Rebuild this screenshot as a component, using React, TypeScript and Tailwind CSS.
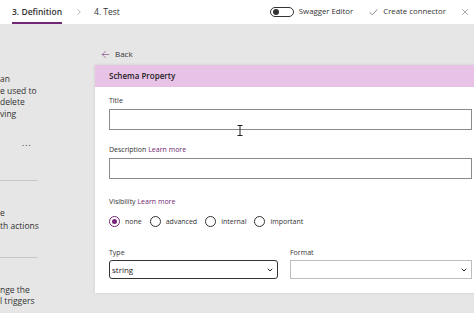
import { ArrowLeft, Check, ChevronDown, ChevronRight, X } from "lucide-react";

const font = { fontFamily: '"Open Sans", "Noto Sans", sans-serif' };

function TextBox() {
    return <div className="h-[21px] w-full border border-[#8a8a8a] bg-white" />;
}

function Radio({ label, checked }: { label: string; checked?: boolean }) {
    return (
        <div className="flex items-center gap-[5px]">
            <span
                className={
                    "flex h-[11px] w-[11px] items-center justify-center rounded-full border " +
                    (checked ? "border-[#742774]" : "border-[#333]")
                }
            >
                {checked && <span className="h-[5px] w-[5px] rounded-full bg-[#742774]" />}
            </span>
            <span className="text-[7px] text-[#333]">{label}</span>
        </div>
    );
}

function LeftText() {
    return (
        <div className="w-[39px] shrink-0 overflow-hidden pt-[49px] text-[8.5px] leading-[11.5px] text-[#333]">
            <p>an</p>
            <p className="whitespace-nowrap">e used to</p>
            <p>delete</p>
            <p>ving</p>
            <p className="mt-[18px] pl-[22px] tracking-[1px]">...</p>
            <div className="mt-[31px] h-px w-[38px] bg-[#c8c8c8]" />
            <p className="mt-[26px]">e</p>
            <p className="mt-[2px] whitespace-nowrap">th actions</p>
            <div className="mt-[25px] h-px w-[38px] bg-[#c8c8c8]" />
            <p className="mt-[26px] whitespace-nowrap">nge the</p>
            <p className="whitespace-nowrap">l triggers</p>
        </div>
    );
}

export default function App() {
    return (
        <div className="flex h-[313px] w-[474px] flex-col overflow-hidden bg-white" style={font}>
            <div className="flex h-[24px] shrink-0 items-stretch bg-white text-[8.5px] text-[#333]">
                <div className="ml-[12px] flex items-center border-b-[2px] border-[#742774] pt-[2px] font-semibold text-[#333]">
                    3. Definition
                </div>
                <div className="ml-[12px] flex items-center">
                    <ChevronRight size={10} strokeWidth={1.2} className="text-[#666]" />
                </div>
                <div className="ml-[10px] flex items-center">4. Test</div>
                <div className="ml-auto flex items-center gap-[5px] text-[7.8px]">
                    <span className="flex h-[10px] w-[24px] items-center rounded-full border border-[#333] px-[2px]">
                        <span className="h-[6px] w-[6px] rounded-full bg-[#333]" />
                    </span>
                    <span>Swagger Editor</span>
                </div>
                <div className="ml-[15px] flex items-center gap-[4px] text-[7.8px]">
                    <Check size={11} strokeWidth={1.2} />
                    <span>Create connector</span>
                </div>
                <div className="ml-[14px] mr-[4px] flex items-center">
                    <X size={10} strokeWidth={1.2} className="text-[#555]" />
                </div>
            </div>
            <div className="flex flex-1 bg-[#e6e6e6]">
                <LeftText />
                <div className="ml-[56px] flex w-[391px] shrink-0 flex-col">
                    <div className="mt-[23px] flex h-[14px] items-center gap-[4px] pl-[5px] text-[8px] text-[#333]">
                        <ArrowLeft size={11} strokeWidth={1.2} className="text-[#742774]" />
                        <span>Back</span>
                    </div>
                    <div className="relative mt-[4px] bg-white shadow-[0_0_3px_rgba(0,0,0,0.12)]">
                        <div className="flex h-[22px] items-center bg-[#e9c2e8] px-[14px] text-[8px] font-semibold text-[#222]">
                            Schema Property
                        </div>
                        <div className="px-[14px] pb-[14px] pt-[9px] text-[7px] leading-[10px] text-[#333]">
                            <div className="mb-[3px]">Title</div>
                            <TextBox />
                            <div className="mb-[3px] mt-[15px]">
                                Description <span className="text-[#742774]">Learn more</span>
                            </div>
                            <TextBox />
                            <div className="mb-[9px] mt-[18px]">
                                Visibility <span className="text-[#742774]">Learn more</span>
                            </div>
                            <div className="flex items-center gap-[8px]">
                                <Radio label="none" checked />
                                <Radio label="advanced" />
                                <Radio label="internal" />
                                <Radio label="important" />
                            </div>
                            <div className="mt-[21px] flex gap-[12px]">
                                <div className="w-[169px]">
                                    <div className="mb-[2px]">Type</div>
                                    <div className="flex h-[19px] items-center justify-between rounded-[3px] border-[1.5px] border-[#333] pl-[2px] pr-[3px] text-[8px] text-[#222]">
                                        <span>string</span>
                                        <ChevronDown size={8} strokeWidth={3} />
                                    </div>
                                </div>
                                <div className="flex-1">
                                    <div className="mb-[2px]">Format</div>
                                    <div className="flex h-[19px] items-center justify-end border border-[#bdbdbd] pr-[3px] text-[#222]">
                                        <ChevronDown size={8} strokeWidth={3} />
                                    </div>
                                </div>
                            </div>
                        </div>
                        <svg
                            className="absolute left-[142px] top-[60px]"
                            width="6"
                            height="11"
                            viewBox="0 0 6 11"
                            fill="none"
                            stroke="#222"
                            strokeWidth="1"
                        >
                            <path d="M0.5 0.5h5M3 0.5v10M0.5 10.5h5" />
                        </svg>
                    </div>
                </div>
            </div>
        </div>
    );
}
